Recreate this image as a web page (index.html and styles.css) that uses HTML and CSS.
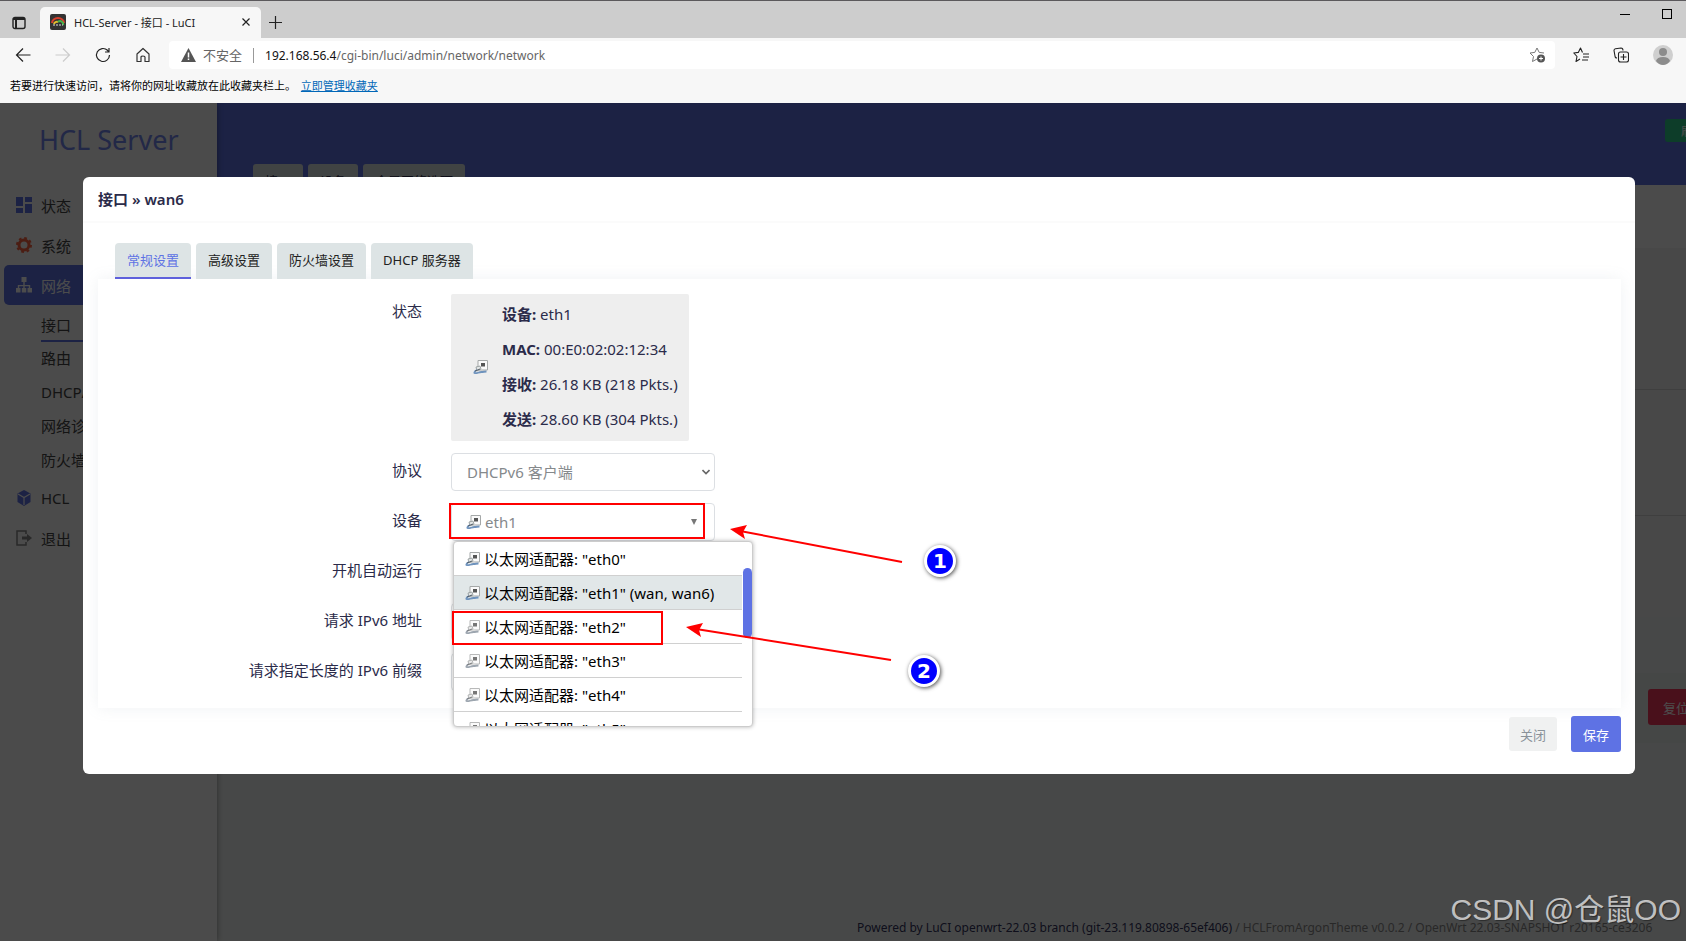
FILE: index.html
```html
<!DOCTYPE html>
<html lang="zh-CN">
<head>
<meta charset="utf-8">
<title>HCL-Server - 接口 - LuCI</title>
<link rel="stylesheet" href="styles.css">
</head>
<body>

<!-- shared icons -->
<svg class="defs" width="0" height="0" aria-hidden="true">
  <symbol id="eth" viewBox="0 0 16 16">
    <path d="M5 1.5h9.5v9.5H5z" fill="#fafafa" stroke="#a5a8a8"/>
    <path d="M8 4h4v3.500H8z" fill="#555"/>
    <path d="M3 8l4-1 1 3-4 2z" fill="#e3e6e6" stroke="#8d9494" stroke-width=".8"/>
    <path d="M4 11c-2 1-3 2-2.500 3 2 1 4-1 7-1 2 0 3-.5 5-.5" fill="none" stroke="#6f93bd" stroke-width="1.800"/>
    <path d="M2 12l5-2" stroke="#555e66"/>
  </symbol>
</svg>

<header class="browser">
  <div class="tabstrip">
    <button class="icon-btn tab-actions" aria-label="标签页操作">
      <svg width="14" height="14" viewBox="0 0 14 14"><rect x="1" y="1.500" width="12" height="11" rx="2" fill="none" stroke="#222" stroke-width="1.400"/><path d="M1 3h12M4 3v9" stroke="#222" stroke-width="2"/></svg>
    </button>
    <div class="tab">
      <svg width="16" height="16" viewBox="0 0 16 16"><rect width="16" height="16" rx="2" fill="#333"/><path d="M2 9a6 5 0 0 1 12 0" fill="none" stroke="#d8402c" stroke-width="2"/><path d="M4 10a3 3 0 0 1 4-2" fill="none" stroke="#e8c02c" stroke-width="2"/><path d="M8 8a3 3 0 0 1 5 3" fill="none" stroke="#48b04c" stroke-width="2"/><path d="M3 11h10" stroke="#ddd" stroke-dasharray="2 1"/></svg>
      <span class="tab-title">HCL-Server - 接口 - LuCI</span>
      <button class="icon-btn" aria-label="关闭标签页"><svg width="8" height="8" viewBox="0 0 8 8"><path d="M.5.5l7 7M7.500.5l-7 7" stroke="#222" stroke-width="1.200"/></svg></button>
    </div>
    <button class="icon-btn new-tab" aria-label="新建标签页"><svg width="13" height="13" viewBox="0 0 13 13"><path d="M6.500 0v13M0 6.500h13" stroke="#222" stroke-width="1.200"/></svg></button>
    <div class="window-btns">
      <button class="icon-btn" aria-label="最小化"><svg width="10" height="10" viewBox="0 0 10 10"><path d="M0 5.500h10" stroke="#000"/></svg></button>
      <button class="icon-btn" aria-label="最大化"><svg width="10" height="10" viewBox="0 0 10 10"><rect x=".5" y=".5" width="9" height="9" fill="none" stroke="#000"/></svg></button>
    </div>
  </div>
  <div class="toolbar">
    <nav class="nav-btns">
      <button class="icon-btn" aria-label="后退"><svg width="16" height="16" viewBox="0 0 16 16"><path d="M15.500 8H1.500M8 1.500L1.500 8 8 14.500" fill="none" stroke="#222" stroke-width="1.200"/></svg></button>
      <button class="icon-btn" aria-label="前进" disabled><svg width="16" height="16" viewBox="0 0 16 16"><path d="M.5 8h14M8 1.500L14.500 8 8 14.500" fill="none" stroke="#ccc" stroke-width="1.200"/></svg></button>
      <button class="icon-btn" aria-label="刷新"><svg width="16" height="16" viewBox="0 0 16 16"><path d="M14.500 8A6.500 6.500 0 1 1 12.500 3.300L14 5M14 1v4h-4" fill="none" stroke="#222" stroke-width="1.200"/></svg></button>
      <button class="icon-btn" aria-label="主页"><svg width="16" height="16" viewBox="0 0 16 16"><path d="M2 7l6-5.500L14 7v7.500h-4V10q0-1-2-1t-2 1v4.500H2z" fill="none" stroke="#333" stroke-width="1.200" stroke-linejoin="round"/></svg></button>
    </nav>
    <div class="address">
      <svg width="15" height="14" viewBox="0 0 15 14"><path d="M7.500 0L15 14H0z" fill="#555"/><path d="M7.500 4.500v5M7.500 10.500v1.500" stroke="#fff" stroke-width="1.500"/></svg>
      <span class="insecure">不安全</span>
      <span class="url"><b>192.168.56.4</b>/cgi-bin/luci/admin/network/network</span>
      <button class="icon-btn" aria-label="添加到收藏夹"><svg width="16" height="16" viewBox="0 0 16 16"><path d="M8 12l-4.500 2.500 1-5L1 6l4.800-.6L8 1l2.200 4.400L15 6" fill="none" stroke="#777" stroke-linejoin="round"/><circle cx="12" cy="11.500" r="4" fill="#555"/><path d="M12 9.500v4M10 11.500h4" stroke="#fff"/></svg></button>
    </div>
    <div class="side-btns">
      <button class="icon-btn" aria-label="收藏夹"><svg width="16" height="16" viewBox="0 0 16 16"><path d="M7 12l-4 2.500 1-5L.8 6l4.500-.6L7.500 1l2 4.400M10 7h6M10 10h6M9 13h6" fill="none" stroke="#222" stroke-width="1.100" stroke-linejoin="round"/></svg></button>
      <button class="icon-btn" aria-label="集锦"><svg width="16" height="16" viewBox="0 0 16 16"><path d="M4 11Q2 11 2 9L1 3.500Q1 2 2.500 1.800L8 1q2 0 2 2.500" fill="none" stroke="#222" stroke-width="1.100"/><rect x="5.500" y="5" width="10" height="10" rx="2" fill="#f7f7f7" stroke="#222" stroke-width="1.100"/><path d="M10.500 7v6M7.500 10h6" stroke="#222" stroke-width="1.100"/></svg></button>
      <button class="icon-btn" aria-label="用户"><svg width="20" height="20" viewBox="0 0 20 20"><circle cx="10" cy="10" r="10" fill="#cfcfcf"/><circle cx="10" cy="7" r="4" fill="#8c8c8c"/><path d="M3 16q1-4 7-4t7 4q-3 4-7 4t-7-4z" fill="#8c8c8c"/></svg></button>
    </div>
  </div>
  <div class="bookmarks">若要进行快速访问，请将你的网址收藏放在此收藏夹栏上。 <a href="#">立即管理收藏夹</a></div>
</header>

<div class="page">
  <aside class="sidebar">
    <a class="brand" href="#">HCL Server</a>
    <ul class="menu">
      <li><a href="#"><svg width="16" height="16" viewBox="0 0 16 16" fill="#5e72e4"><path d="M0 0h7v9H0zM0 11h7v5H0zM9 0h7v5H9zM9 7h7v9H9z"/></svg>状态</a></li>
      <li><a href="#"><svg width="16" height="16" viewBox="0 0 16 16"><circle cx="8" cy="8" r="5" fill="none" stroke="#fb6340" stroke-width="3"/><circle cx="8" cy="8" r="7" fill="none" stroke="#fb6340" stroke-width="2" stroke-dasharray="2.750 2.750"/></svg>系统</a></li>
      <li><a class="active" href="#"><svg width="16" height="16" viewBox="0 0 16 16" fill="#fff"><path d="M5.500 0h5v5h-5zM7.300 5h1.400v3h5.500v3h-1.400V9.300H3.200V11H1.800V8h5.500zM0 11h4.500v4.500H0zM5.800 11h4.500v4.500H5.800zM11.500 11H16v4.500h-4.500zM7.300 8h1.400v3H7.300z"/></svg>网络</a>
        <ul class="submenu">
          <li><a class="current" href="#">接口</a></li>
          <li><a href="#">路由</a></li>
          <li><a href="#">DHCP/DNS</a></li>
          <li><a href="#">网络诊断</a></li>
          <li><a href="#">防火墙</a></li>
        </ul>
      </li>
      <li><a href="#"><svg width="16" height="16" viewBox="0 0 16 16"><path d="M8 0l6.500 3.500v8.500L8 16l-6.500-4V3.500z" fill="#5e72e4"/><path d="M2 4l6 3.500L14 4M8 7.500V15" fill="none" stroke="#fff" stroke-width="1.200"/></svg>HCL</a></li>
      <li><a href="#"><svg width="16" height="16" viewBox="0 0 16 16"><path d="M10 4V1H1v14h9v-3" fill="none" stroke="#8a8a8a" stroke-width="1.500"/><path d="M6 6.500h5V4l5 4-5 4V9.500H6z" fill="#8a8a8a"/></svg>退出</a></li>
    </ul>
  </aside>
  <main class="main">
    <div class="banner">
      <button class="refresh">刷新</button>
      <div class="page-tabs"><a href="#">接口</a><a href="#">设备</a><a href="#">全局网络选项</a></div>
    </div>
    <div class="card">
      <div class="row"></div>
      <div class="row"></div>
      <div class="row"></div>
    </div>
    <div class="page-actions"><button class="reset">复位</button></div>
    <footer><a href="#">Powered by LuCI openwrt-22.03 branch (git-23.119.80898-65ef406)</a> / HCLFromArgonTheme v0.0.2 / OpenWrt 22.03-SNAPSHOT r20165-ce3206</footer>
  </main>

  <div class="overlay">
    <section class="modal" role="dialog" aria-labelledby="modal-title">
      <h4 id="modal-title">接口 » wan6</h4>
      <ul class="tabs">
        <li><a class="selected" href="#">常规设置</a></li>
        <li><a href="#">高级设置</a></li>
        <li><a href="#">防火墙设置</a></li>
        <li><a href="#">DHCP 服务器</a></li>
      </ul>
      <form class="panel" id="iface">
        <div class="field">
          <span class="label">状态</span>
          <div class="status">
            <svg width="16" height="16"><use href="#eth"/></svg>
            <div>
              <p><strong>设备:</strong> eth1</p>
              <p><strong>MAC:</strong> 00:E0:02:02:12:34</p>
              <p><strong>接收:</strong> 26.18 KB (218 Pkts.)</p>
              <p><strong>发送:</strong> 28.60 KB (304 Pkts.)</p>
            </div>
          </div>
        </div>
        <div class="field">
          <label class="label" for="proto">协议</label>
          <div class="select-wrap">
            <select class="control" id="proto"><option>DHCPv6 客户端</option></select>
            <svg width="8" height="6" viewBox="0 0 8 6"><path d="M.5 1L4 4.500 7.500 1" fill="none" stroke="#666" stroke-width="1.600"/></svg>
          </div>
        </div>
        <div class="field">
          <label class="label" for="device">设备</label>
          <div class="dropdown">
            <button type="button" class="control" id="device" aria-haspopup="listbox" aria-expanded="true">
              <svg width="16" height="16"><use href="#eth"/></svg>eth1<span class="caret"></span>
            </button>
            <div class="mark mark-device"></div>
            <div class="options">
              <ul role="listbox" aria-label="设备">
                <li role="option"><svg width="16" height="16"><use href="#eth"/></svg>以太网适配器: "eth0"</li>
                <li role="option" aria-selected="true"><svg width="16" height="16"><use href="#eth"/></svg>以太网适配器: "eth1" (wan, wan6)</li>
                <li role="option" class="down"><svg width="16" height="16"><use href="#eth"/></svg>以太网适配器: "eth2"</li>
                <li role="option" class="down"><svg width="16" height="16"><use href="#eth"/></svg>以太网适配器: "eth3"</li>
                <li role="option" class="down"><svg width="16" height="16"><use href="#eth"/></svg>以太网适配器: "eth4"</li>
                <li role="option" class="down"><svg width="16" height="16"><use href="#eth"/></svg>以太网适配器: "eth5"</li>
              </ul>
              <span class="thumb"></span>
            </div>
            <div class="mark mark-option"></div>
            <svg class="arrows" width="260" height="190" viewBox="0 0 260 190">
              <g stroke="#f00" stroke-width="2"><path d="M50 28l162 31M6 126l195 31"/></g>
              <g fill="#f00"><path d="M40 26l17-4-4 7 2 7zM-4 124l17-4-4 7 2 7z"/></g>
            </svg>
            <span class="step step-1">1</span>
            <span class="step step-2">2</span>
          </div>
        </div>
        <div class="field">
          <label class="label" for="auto">开机自动运行</label>
          <input type="checkbox" id="auto" checked>
        </div>
        <div class="field">
          <label class="label" for="reqaddr">请求 IPv6 地址</label>
          <select class="control" id="reqaddr"><option>try</option></select>
        </div>
        <div class="field">
          <label class="label" for="reqprefix">请求指定长度的 IPv6 前缀</label>
          <select class="control" id="reqprefix"><option>自动</option></select>
        </div>
      </form>
      <div class="modal-actions">
        <button class="close">关闭</button>
        <button class="save" form="iface">保存</button>
      </div>
    </section>
  </div>
  <div class="watermark">CSDN @仓鼠OO</div>
</div>

</body>
</html>
```

FILE: styles.css
```css
* {
  box-sizing: border-box;
}

body {
  margin: 0;
  height: 100vh;
  display: flex;
  flex-direction: column;
  overflow: hidden;
  font-family: "Noto Sans", "Noto Sans CJK SC", sans-serif;
  font-size: 15px;
  color: #2b2b4a;
}

ul {
  list-style: none;
  margin: 0;
  padding: 0;
}

a {
  color: inherit;
  text-decoration: none;
}

button, select, input {
  font: inherit;
  color: inherit;
}

svg {
  flex: none;
  display: block;
}

.defs {
  position: absolute;
}

/* browser frame */

.browser {
  flex: none;
  height: 103px;
  background: #f7f7f7;
  color: #222;
  font-size: 12px;
}

.icon-btn {
  display: flex;
  padding: 0;
  border: 0;
  background: none;
}

.tabstrip {
  display: flex;
  align-items: center;
  height: 38px;
  padding-top: 6px;
  border-top: 1px solid #5b595c;
  background: #cdcdcd;
}

.tab-actions {
  margin-left: 12px;
}

.tab {
  display: flex;
  align-items: center;
  width: 221px;
  height: 31px;
  margin-left: 14px;
  padding: 0 11px 2px 10px;
  border-radius: 5px 5px 0 0;
  background: #f7f7f7;
}

.tab-title {
  flex: 1;
  margin-left: 8px;
  font-size: 11px;
}

.new-tab {
  margin-left: 8px;
}

.window-btns {
  display: flex;
  gap: 32px;
  margin: 0 14px 18px auto;
}

.toolbar {
  display: flex;
  align-items: center;
  height: 34px;
}

.nav-btns {
  display: flex;
  gap: 24px;
  padding: 0 18px 0 15px;
}

.address {
  flex: 1;
  display: flex;
  align-items: center;
  height: 28px;
  padding: 0 10px 0 12px;
  border-radius: 4px;
  background: #fff;
  color: #666;
}

.insecure {
  margin: 0 11px 0 7px;
  padding-right: 11px;
  border-right: 1px solid #999;
  line-height: 15px;
  font-size: 13px;
}

.url {
  flex: 1;
}

.url b {
  font-weight: 400;
  color: #111;
}

.side-btns {
  display: flex;
  align-items: center;
  gap: 24px;
  padding: 0 13px 0 18px;
}

.bookmarks {
  padding: 5px 10px;
  font-size: 11px;
  color: #000;
}

.bookmarks a {
  margin-left: 2px;
  color: #0067b8;
  text-decoration: underline;
}

/* page behind the dialog */

.page {
  position: relative;
  flex: 1;
  display: flex;
  min-height: 0;
  overflow: hidden;
  background: #eff2f1;
}

.sidebar {
  z-index: 1;
  flex: none;
  width: 217px;
  background: #fafafa;
  box-shadow: 0 0 6px rgba(0, 0, 0, .4);
  color: #444;
}

.brand {
  display: block;
  padding: 17px 0 0 39px;
  line-height: 40px;
  font-size: 27px;
  color: #7385ee;
}

.menu {
  padding: 25px 4px 0;
}

.menu > li > a {
  display: flex;
  align-items: center;
  gap: 9px;
  height: 40px;
  padding: 0 12px;
  border-radius: 5px;
}

.menu > li > .active {
  background: #5e72e4;
  color: #fff;
}

.submenu {
  padding: 4px 0 0 37px;
}

.submenu a {
  display: block;
  height: 34px;
  line-height: 32px;
}

.submenu .current {
  height: 33px;
  border-bottom: 2px solid #5e72e4;
}

.main {
  flex: 1;
  min-width: 0;
  display: flex;
  flex-direction: column;
}

.banner {
  height: 82px;
  padding: 16px 0 0 36px;
  background: #5e72e4;
}

.refresh, .reset {
  display: block;
  width: 56px;
  border: 0;
  border-radius: 3px;
  color: #fff;
  white-space: nowrap;
}

.refresh {
  height: 23px;
  margin: 0 -35px 0 auto;
  padding: 0 12px;
  background: #2dce89;
  font-size: 12px;
}

.page-tabs {
  display: flex;
  gap: 5px;
  margin-top: 22px;
}

.page-tabs a {
  height: 36px;
  padding: 0 12px;
  border-radius: 3px 3px 0 0;
  background: #d8e0e0;
  line-height: 34px;
  font-size: 13px;
}

.card {
  padding-top: 63px;
  background: #fafafa;
}

.row {
  height: 126px;
  border-bottom: 1px solid #d4d4d4;
  background: #f0f0f0;
}

.row:first-child {
  height: 142px;
}

.row:last-child {
  height: 101px;
  border: 0;
}

.page-actions {
  margin-top: 56px;
  padding: 16px 0 18px;
  background: #e8edeb;
}

.reset {
  height: 36px;
  margin: 0 -18px 0 auto;
  padding: 0 12px;
  background: #f5365c;
  font-size: 13px;
}

footer {
  margin: auto 0 5px 640px;
  white-space: nowrap;
  font-size: 12px;
  color: #888;
}

footer a {
  color: #32325d;
}

/* dialog */

.overlay {
  position: absolute;
  z-index: 2;
  inset: 0;
  padding: 74px 51px 0 83px;
  background: rgba(0, 0, 0, .7);
}

.modal {
  padding: 0 14px 22px 15px;
  border-radius: 6px;
  background: #fff;
}

.modal h4 {
  margin: 0 -14px 20px -15px;
  padding: 0 15px;
  border-bottom: 2px solid #fbfbfb;
  line-height: 44px;
  font-size: 15px;
  font-weight: 600;
}

.tabs {
  display: flex;
  gap: 5px;
  padding: 0 17px;
}

.tabs a {
  display: block;
  height: 36px;
  padding: 0 12px;
  border-radius: 4px 4px 0 0;
  background: #dde4e5;
  line-height: 34px;
  font-size: 13px;
  color: #222;
}

.tabs .selected {
  border-bottom: 2px solid #5e60dc;
  color: #5e72e4;
}

.panel {
  display: flex;
  flex-direction: column;
  gap: 12px;
  padding: 15px 0 17px;
  box-shadow: 0 0 14px rgba(136, 152, 170, .13);
}

.field {
  display: flex;
  min-height: 38px;
}

.label {
  width: 324px;
  margin-right: 29px;
  line-height: 35px;
  text-align: right;
}

.status {
  display: flex;
  align-items: center;
  gap: 13px;
  padding: 3px 11px 4px 22px;
  border-radius: 2px;
  background: #eee;
}

.status p {
  margin: 0;
  line-height: 35px;
}

.control {
  width: 264px;
  height: 38px;
  padding: 0 15px;
  border: 1px solid #dcdfe3;
  border-radius: 4px;
  background: #fff;
  color: #85898c;
  appearance: none;
}

.select-wrap {
  display: grid;
  align-items: center;
}

.select-wrap > * {
  grid-area: 1 / 1;
}

.select-wrap svg {
  justify-self: end;
  margin-right: 5px;
}

.dropdown {
  position: relative;
}

.dropdown .control {
  display: flex;
  align-items: center;
  gap: 3px;
  padding: 0 14px;
  text-align: left;
}

.caret {
  margin: 0 3px 0 auto;
  border: 3px solid transparent;
  border-top: 6px solid #777;
  border-bottom: 0;
}

.options {
  position: absolute;
  z-index: 1;
  top: 38px;
  left: 2px;
  width: 300px;
  height: 186px;
  overflow: hidden;
  border: 1px solid #ccc;
  border-radius: 4px;
  background: #fff;
  box-shadow: 0 0 4px rgba(0, 0, 0, .3);
  color: #000;
}

.options li {
  display: flex;
  align-items: center;
  gap: 3px;
  width: 288px;
  height: 34px;
  padding: 0 11px;
  border-bottom: 1px solid #d0d0d0;
}

.options li[aria-selected] {
  background: #e1e7e8;
}

.options .down svg {
  filter: grayscale(.7);
  opacity: .8;
}

.thumb {
  position: absolute;
  top: 26px;
  right: 0;
  width: 9px;
  height: 70px;
  border-radius: 5px;
  background: #5e72e4;
}

.modal-actions {
  display: flex;
  justify-content: flex-end;
  align-items: center;
  gap: 14px;
  padding-top: 8px;
}

.modal-actions button {
  height: 36px;
  padding: 0 12px;
  border: 0;
  border-radius: 3px;
  font-size: 13px;
}

.modal-actions .close {
  height: 34px;
  padding: 0 11px;
  background: #f0f1f1;
  color: #8a9299;
}

.modal-actions .save {
  background: #5e72e4;
  color: #fff;
}

/* guide marks over the form */

.mark {
  position: absolute;
  z-index: 2;
  border: 2px solid #f00;
}

.mark-device {
  top: 0;
  left: -2px;
  width: 256px;
  height: 36px;
}

.mark-option {
  top: 108px;
  left: 1px;
  width: 211px;
  height: 34px;
}

.arrows {
  position: absolute;
  z-index: 2;
  top: 0;
  left: 239px;
  overflow: visible;
}

.step {
  position: absolute;
  z-index: 2;
  width: 32px;
  height: 32px;
  border: 3px solid #fff;
  border-radius: 50%;
  background: #00f;
  box-shadow: 1px 1px 4px rgba(0, 0, 0, .7);
  line-height: 26px;
  text-align: center;
  font-family: "DejaVu Sans", sans-serif;
  font-size: 20px;
  font-weight: 700;
  color: #fff;
}

.step-1 {
  top: 42px;
  left: 473px;
}

.step-2 {
  top: 152px;
  left: 457px;
}

.watermark {
  position: absolute;
  z-index: 3;
  right: 5px;
  bottom: 8px;
  font-family: "Liberation Sans", "Noto Sans CJK SC", sans-serif;
  font-size: 30px;
  line-height: 46px;
  color: rgba(255, 255, 255, .7);
  text-shadow: 1px 1px 1px rgba(0, 0, 0, .4);
}
```
